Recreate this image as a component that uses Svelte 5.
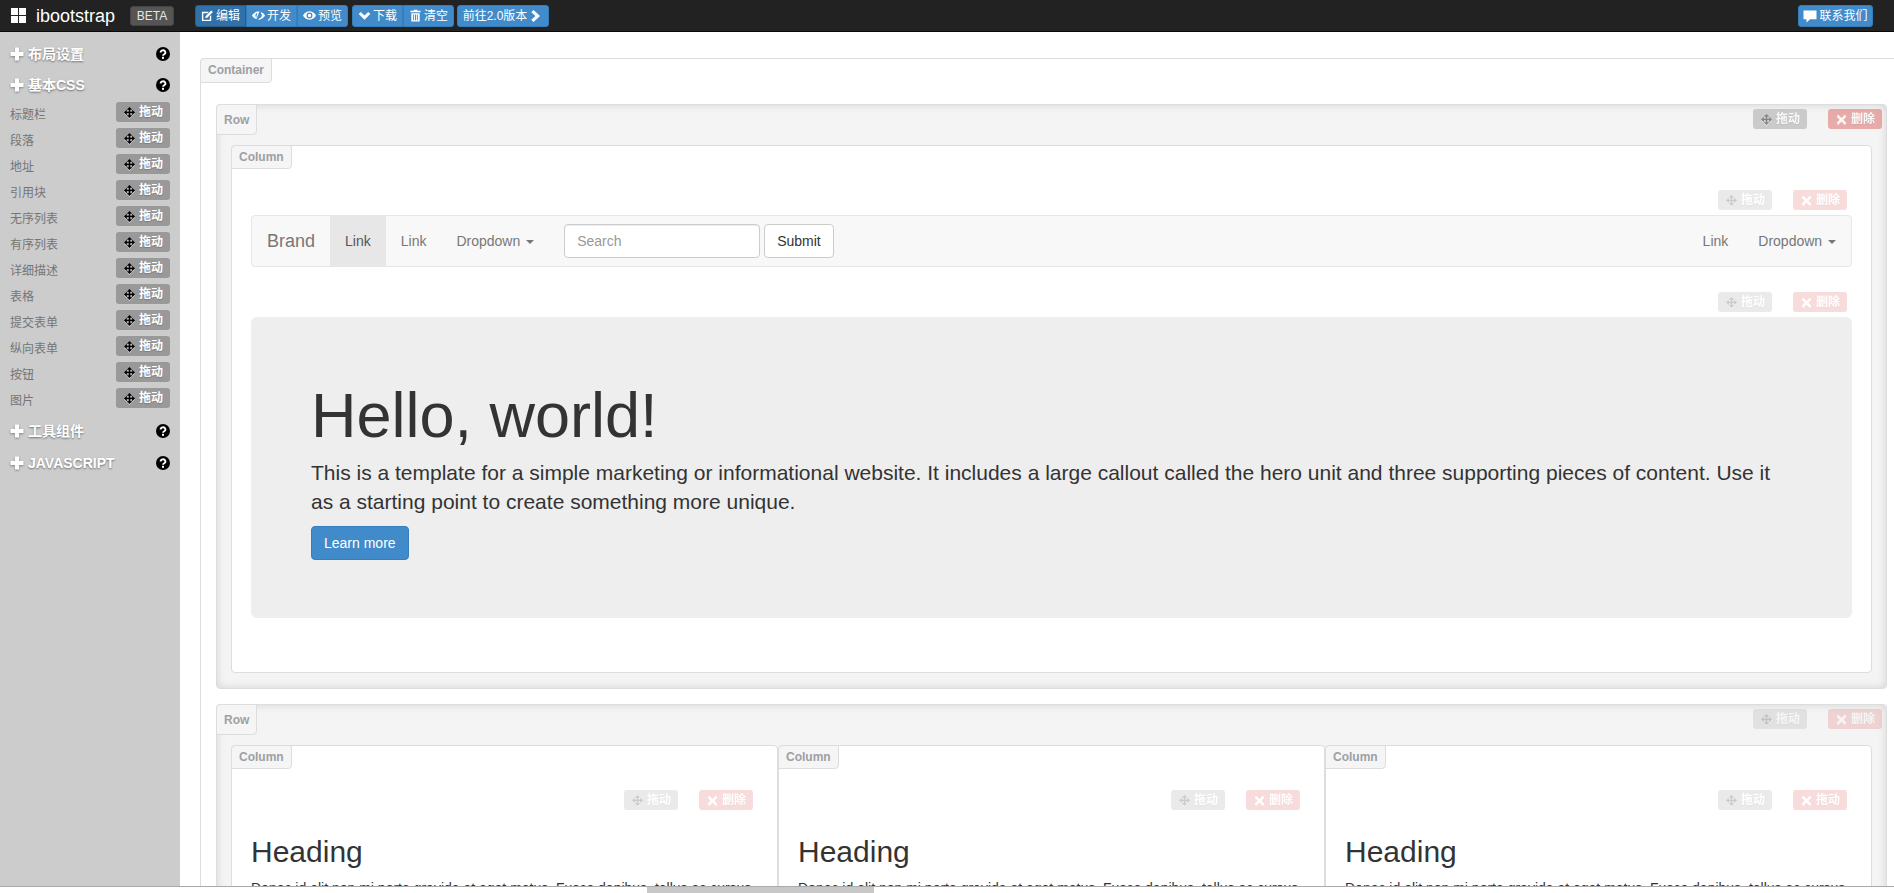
<!--
  ibootstrap layout editor: top bar, component sidebar, and the canvas with
  nested Container / Row / Column boxes.
-->
<script lang="ts">
  const icons: Record<string, string> = {
    grid: 'M0 0h6.5v6.5H0zM7.5 0H14v6.5H7.5zM0 7.5h6.5V14H0zM7.5 7.5H14V14H7.5z',
    edit: 'M1 3h7.5L7 4.5H2.5v7h7V8L11 6.5V13H1zM5 7.5l6-6 1.8 1.8-6 6-2.3.5z',
    eyeClose: 'M8 2.4 4.7 11C2.5 10.2.8 8.5 0 7c1-2 3.8-4.6 8-4.6zM5.8 4a3.2 3.2 0 0 0-1.2 5.2zM9.6 3.2C11.8 4 13.2 5.6 14 7c-.9 1.7-3.5 4.6-7.3 4.6l.7-1.5a3.2 3.2 0 0 0 2.2-5.5z',
    eye: 'M7 2.5C3.5 2.5 1 5 0 7c1 2 3.5 4.5 7 4.5S13 9 14 7c-1-2-3.5-4.5-7-4.5zM7 3.8a3.2 3.2 0 1 1 0 6.4 3.2 3.2 0 0 1 0-6.4zM7 5.2a1.8 1.8 0 1 0 0 3.6 1.8 1.8 0 0 0 0-3.6z',
    down: 'M7 11.5.8 5.3 3 3.1l4 4 4-4 2.2 2.2z',
    right: 'M4.5 1 11 7l-6.5 6-2.2-2.2L6.5 7 2.3 3.2z',
    trash: 'M5 .8h4V2h3.5v1.5h-11V2H5zM2.5 4.5h9V13.5h-9zM4.5 6v6h1V6zM6.5 6v6h1V6zM8.5 6v6h1V6z',
    comment: 'M.5 1.5h13v8.7H7L3.5 13.5v-3.3H.5z',
    plus: 'M5 .5h4V5h4.5v4H9v4.5H5V9H.5V5H5z',
    move: 'M7 0l3.4 3.6H8V6h2.4V3.6L14 7l-3.6 3.4V8H8v2.4h2.4L7 14l-3.4-3.6H6V8H3.6v2.4L0 7l3.6-3.4V6H6V3.6H3.6z',
    remove: 'M2.8.9 7 5.1 11.2.9l1.9 1.9L8.9 7l4.2 4.2-1.9 1.9L7 8.9l-4.2 4.2-1.9-1.9L5.1 7 .9 2.8z',
  };

  const widgets = [
    '标题栏', '段落', '地址', '引用块', '无序列表', '有序列表',
    '详细描述', '表格', '提交表单', '纵向表单', '按钮', '图片',
  ];

  const lorem =
    'Donec id elit non mi porta gravida at eget metus. Fusce dapibus, tellus ac cursus commodo, tortor mauris condimentum nibh, ut fermentum massa justo sit amet risus.';

  // the third column's red button really does say 拖动 in the source page
  const columns = ['删除', '删除', '拖动'];
</script>

{#snippet icon(name: string, size = 13)}
  <svg class="icon" width={size} height={size} viewBox="0 0 14 14" aria-hidden="true">
    <path fill-rule="evenodd" d={icons[name]} />
  </svg>
{/snippet}

{#snippet help()}
  <svg class="help" width="14" height="14" viewBox="0 0 14 14" aria-hidden="true">
    <circle cx="7" cy="7" r="7" fill="#000" />
    <path d="M4.6 5.4a2.4 2.1 0 1 1 3.6 1.8c-.8.5-1.2.8-1.2 1.6" fill="none" stroke="#fff" stroke-width="1.8" />
    <rect x="6" y="9.8" width="2" height="2" fill="#fff" />
  </svg>
{/snippet}

{#snippet tools(remove = '删除')}
  <span class="tool drag">{@render icon('move', 11)}<b>拖动</b></span>
  <span class="tool del">{@render icon('remove', 11)}<b>{remove}</b></span>
{/snippet}

<div class="page">
  <header class="topbar">
    <span class="logo">{@render icon('grid', 15)}</span>
    <span class="brand-name">ibootstrap</span>
    <span class="beta">BETA</span>
    <div class="btn-group">
      <span class="btn active">{@render icon('edit')}编辑</span>
      <span class="btn">{@render icon('eyeClose')}开发</span>
      <span class="btn">{@render icon('eye')}预览</span>
    </div>
    <div class="btn-group last">
      <span class="btn">{@render icon('down')}下载</span>
      <span class="btn">{@render icon('trash')}清空</span>
    </div>
    <span class="btn single">前往2.0版本{@render icon('right', 14)}</span>
    <span class="btn contact">{@render icon('comment', 14)}联系我们</span>
  </header>

  <div class="body">
    <aside class="sidebar">
      <div class="side-head">{@render icon('plus', 14)}<span>布局设置</span>{@render help()}</div>
      <div class="side-head">{@render icon('plus', 14)}<span>基本CSS</span>{@render help()}</div>
      <ul class="widgets">
        {#each widgets as name}
          <li>
            <span class="widget-name">{name}</span>
            <span class="tool drag">{@render icon('move', 11)}<b>拖动</b></span>
          </li>
        {/each}
      </ul>
      <div class="side-head">{@render icon('plus', 14)}<span>工具组件</span>{@render help()}</div>
      <div class="side-head lower">{@render icon('plus', 14)}<span>JAVASCRIPT</span>{@render help()}</div>
    </aside>

    <main class="canvas">
      <section class="box container">
        <span class="tag tag-container">Container</span>

        <section class="box row hot">
          <span class="tag tag-row">Row</span>
          <div class="row-tools">{@render tools()}</div>
          <div class="box col">
            <span class="tag">Column</span>
            <div class="view-tools">{@render tools()}</div>
            <nav class="navbar">
              <span class="nav-brand">Brand</span>
              <span class="nav-link on">Link</span>
              <span class="nav-link">Link</span>
              <span class="nav-link">Dropdown <i class="caret"></i></span>
              <form class="nav-form">
                <input type="text" placeholder="Search" />
                <span class="btn-default">Submit</span>
              </form>
              <span class="spacer"></span>
              <span class="nav-link">Link</span>
              <span class="nav-link">Dropdown <i class="caret"></i></span>
            </nav>
            <div class="view-tools second">{@render tools()}</div>
            <div class="jumbotron">
              <h1>Hello, world!</h1>
              <p>This is a template for a simple marketing or informational website. It includes a large callout called the hero unit and three supporting pieces of content. Use it as a starting point to create something more unique.</p>
              <span class="btn-primary">Learn more</span>
            </div>
          </div>
        </section>

        <section class="box row">
          <span class="tag tag-row">Row</span>
          <div class="row-tools">{@render tools()}</div>
          <div class="cols">
            {#each columns as remove}
              <div class="box col">
                <span class="tag">Column</span>
                <div class="view-tools">{@render tools(remove)}</div>
                <h2>Heading</h2>
                <p class="copy">{lorem}</p>
              </div>
            {/each}
          </div>
        </section>
      </section>
    </main>
  </div>

  <div class="hscroll"><span class="thumb"></span></div>
</div>

<style>
  :global(body) {
    margin: 0;
    overflow: hidden;
    background: #fff;
  }
  .page {
    position: relative;
    height: 893px;
    overflow: hidden;
    font-family: 'Liberation Sans', 'Noto Sans CJK SC', sans-serif;
    font-size: 14px;
    line-height: 20px;
    color: #333;
  }
  .icon {
    display: block;
    flex: none;
    fill: currentColor;
  }

  /* top bar */
  .topbar {
    display: flex;
    align-items: center;
    height: 31px;
    padding: 0 21px 0 11px;
    background: #222;
    border-bottom: 1px solid #080808;
    color: #fff;
    font-size: 12px;
    box-sizing: content-box;
  }
  .logo {
    margin-right: 10px;
  }
  .brand-name {
    width: 94px;
    font-size: 18px;
  }
  .beta {
    box-sizing: border-box;
    width: 44px;
    height: 20px;
    margin-right: 21px;
    background: #555;
    border: 1px solid #444;
    border-radius: 3px;
    color: #e6e6e6;
    font-size: 12px;
    line-height: 18px;
    text-align: center;
  }
  .btn-group {
    display: flex;
    margin-right: 4px;
  }
  .btn-group.last {
    margin-right: 3px;
  }
  .btn {
    box-sizing: border-box;
    display: flex;
    align-items: center;
    justify-content: center;
    gap: 2px;
    width: 51px;
    height: 22px;
    background: #428bca;
    border: 1px solid #357ebd;
    color: #fff;
    font-size: 12px;
  }
  .btn-group .btn:first-child {
    border-radius: 3px 0 0 3px;
  }
  .btn-group .btn:last-child {
    border-radius: 0 3px 3px 0;
  }
  .btn.active {
    background: #3071a9;
    border-color: #285e8e;
  }
  .btn.single {
    width: 92px;
    margin-left: 0;
    border-radius: 3px;
  }
  .btn.contact {
    width: 75px;
    margin-left: auto;
    border-radius: 3px;
  }

  .body {
    display: flex;
    height: 861px;
  }

  /* sidebar */
  .sidebar {
    box-sizing: border-box;
    flex: none;
    width: 180px;
    padding: 6px 10px 0;
    background: #ccc;
  }
  .side-head {
    display: flex;
    align-items: center;
    gap: 4px;
    height: 31px;
    color: #fff;
    font-size: 14px;
    font-weight: 700;
    text-shadow: 0 1px 2px rgba(0, 0, 0, 0.45);
  }
  .side-head.lower {
    margin-top: 1px;
  }
  .side-head .icon {
    filter: drop-shadow(0 1px 1px rgba(0, 0, 0, 0.35));
  }
  .side-head span {
    flex: 1;
  }
  .help {
    display: block;
    flex: none;
  }
  .widgets {
    list-style: none;
    margin: 2px 0 1px;
    padding: 0;
  }
  .widgets li {
    display: flex;
    justify-content: space-between;
    height: 26px;
  }
  .widget-name {
    margin-top: 3px;
    color: #757575;
    font-size: 12px;
    line-height: 20px;
  }

  /* drag / delete labels */
  .tool {
    box-sizing: border-box;
    display: flex;
    align-items: center;
    gap: 4px;
    width: 54px;
    height: 20px;
    padding-left: 8px;
    border-radius: 3px;
    font-size: 12px;
    color: #fff;
  }
  .tool .icon {
    color: #000;
    filter: drop-shadow(0 1px 0 rgba(255, 255, 255, 0.6));
  }
  .tool b {
    font-weight: 700;
    text-shadow: 0 1px 1px rgba(0, 0, 0, 0.2);
  }
  .drag {
    background: #999;
  }
  .del {
    background: #d9534f;
  }
  .del .icon {
    color: #fff;
  }
  .view-tools,
  .row-tools {
    display: flex;
    justify-content: flex-end;
    gap: 21px;
    opacity: 0.2;
  }
  .view-tools {
    padding-right: 5px;
    margin-bottom: 5px;
  }
  .view-tools.second {
    margin-top: 25px;
  }
  .row-tools {
    position: absolute;
    top: 4px;
    right: 4px;
  }
  .hot > .row-tools {
    opacity: 0.45;
  }

  /* canvas */
  .canvas {
    flex: 1;
    min-width: 0;
    padding: 26px 0 0 20px;
    overflow: hidden;
  }
  .box {
    position: relative;
    box-sizing: border-box;
    border: 1px solid #ddd;
    border-radius: 4px;
  }
  .container {
    margin-right: -9px;
    padding: 45px 15px 0;
    background: #fff;
  }
  .row {
    margin-bottom: 15px;
    padding: 40px 14px 15px;
    background: #f4f4f4;
    box-shadow: inset 0 0 10px rgba(0, 0, 0, 0.13);
  }
  .col {
    padding: 44px 19px 54px;
    background: #fff;
  }
  .cols {
    display: grid;
    grid-template-columns: repeat(3, 1fr);
  }
  .tag {
    position: absolute;
    top: -1px;
    left: -1px;
    box-sizing: border-box;
    height: 24px;
    padding: 0 7px;
    background: #f5f5f5;
    border: 1px solid #ddd;
    border-radius: 4px 0 4px 0;
    color: #9da0a4;
    font-size: 12px;
    font-weight: 700;
    line-height: 22px;
  }
  .tag-container {
    height: 25px;
    line-height: 23px;
  }
  .tag-row {
    height: 31px;
    line-height: 31px;
  }

  /* navbar */
  .navbar {
    box-sizing: border-box;
    display: flex;
    height: 52px;
    background: #f8f8f8;
    border: 1px solid #e7e7e7;
    border-radius: 4px;
  }
  .nav-brand {
    padding: 15px;
    color: #777;
    font-size: 18px;
  }
  .nav-link {
    padding: 15px;
    color: #777;
    white-space: nowrap;
  }
  .nav-link.on {
    background: #e7e7e7;
    color: #555;
  }
  .caret {
    display: inline-block;
    margin-left: 2px;
    vertical-align: middle;
    border-top: 4px solid;
    border-left: 4px solid transparent;
    border-right: 4px solid transparent;
  }
  .nav-form {
    display: flex;
    gap: 4px;
    margin: 8px 0 0 15px;
  }
  .nav-form input {
    box-sizing: border-box;
    width: 196px;
    height: 34px;
    padding: 6px 12px;
    background: #fff;
    border: 1px solid #ccc;
    border-radius: 4px;
    box-shadow: inset 0 1px 1px rgba(0, 0, 0, 0.075);
    font: inherit;
    color: #555;
  }
  .nav-form input::placeholder {
    color: #999;
    opacity: 1;
  }
  .btn-default {
    box-sizing: border-box;
    height: 34px;
    padding: 6px 12px;
    background: #fff;
    border: 1px solid #ccc;
    border-radius: 4px;
  }
  .spacer {
    flex: 1;
  }

  /* jumbotron */
  .jumbotron {
    box-sizing: border-box;
    height: 301px;
    padding: 64px 60px 0;
    background: #eee;
    border-radius: 6px;
  }
  .jumbotron h1 {
    margin: 0 0 8px;
    font-size: 63px;
    font-weight: 400;
    line-height: 69px;
  }
  .jumbotron p {
    margin: 0 0 10px;
    font-size: 21px;
    line-height: 29px;
  }
  .btn-primary {
    box-sizing: border-box;
    display: inline-block;
    height: 34px;
    padding: 6px 12px;
    background: #428bca;
    border: 1px solid #357ebd;
    border-radius: 4px;
    color: #fff;
  }

  /* columns */
  h2 {
    margin: 25px 0 10px;
    font-size: 30px;
    font-weight: 400;
    line-height: 33px;
  }
  .copy {
    margin: 0 0 10px;
  }

  /* the page's own horizontal scrollbar */
  .hscroll {
    position: absolute;
    left: 0;
    right: 0;
    bottom: 0;
    height: 6px;
    background: #fff;
    border-top: 1px solid #aaa;
  }
  .thumb {
    position: absolute;
    top: 0;
    bottom: 0;
    left: 647px;
    width: 227px;
    background: #c8c8c8;
  }
</style>
